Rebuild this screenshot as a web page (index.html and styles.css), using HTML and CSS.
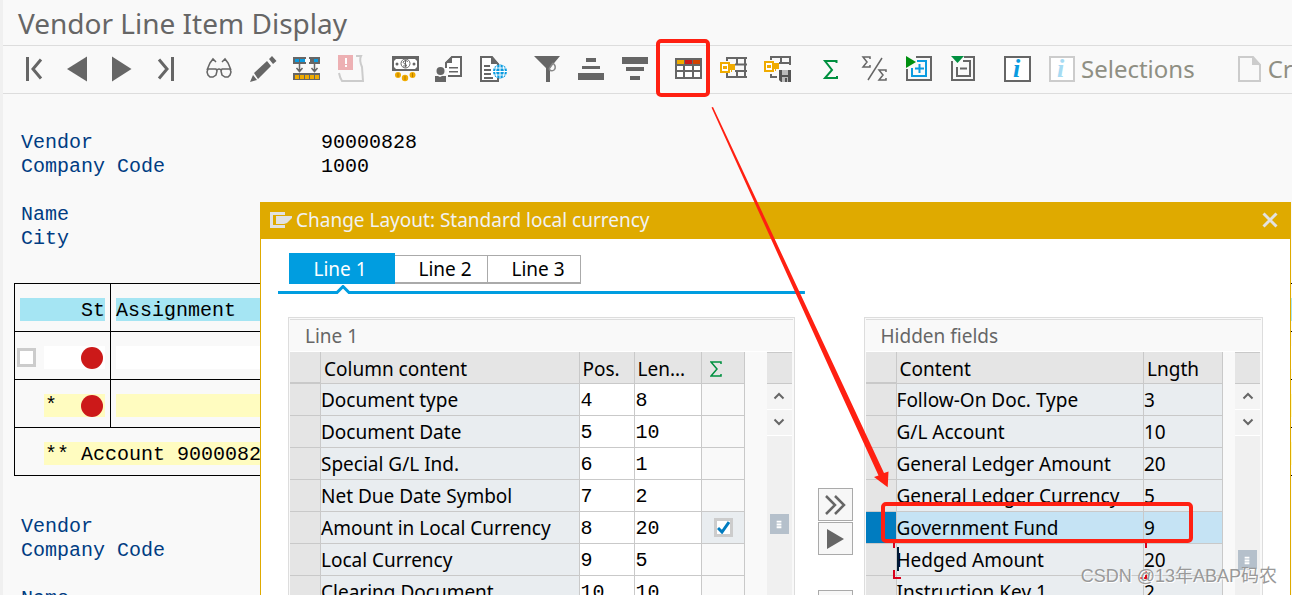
FILE: index.html
```html
<!DOCTYPE html>
<html lang="en">
<head>
<meta charset="utf-8">
<title>Vendor Line Item Display</title>
<link rel="stylesheet" href="styles.css">
</head>
<body>
<div class="app">
  <header class="title-bar"><h1>Vendor Line Item Display</h1></header>

  <nav class="toolbar" aria-label="Application toolbar">
    <div class="group">
      <button class="tool" aria-label="First"><svg class="icon" viewBox="0 0 28 28"><path d="M7 2h3v24H7z" fill="#666"/><path d="M22 4.500L14 14l8 9.500" fill="none" stroke="#666" stroke-width="3"/></svg></button>
      <button class="tool" aria-label="Previous"><svg class="icon" viewBox="0 0 28 28"><path d="M4 14L24 1.500v25z" fill="#666"/></svg></button>
      <button class="tool" aria-label="Next"><svg class="icon" viewBox="0 0 28 28"><path d="M5 1.500L24.500 14 5 26.500z" fill="#666"/></svg></button>
      <button class="tool" aria-label="Last"><svg class="icon" viewBox="0 0 28 28"><path d="M20 2h3v24h-3z" fill="#666"/><path d="M8 4.500L16 14l-8 9.500" fill="none" stroke="#666" stroke-width="3"/></svg></button>
    </div>
    <div class="group">
      <button class="tool" aria-label="Display"><svg class="icon" viewBox="0 0 28 28" fill="none" stroke="#666" stroke-width="1.500"><path d="M3 14h8l1 2-1 4-3 2H5l-2-2-1-3zM17 14h8l1 3-1 3-2 2h-3l-3-2-1-4zM12 15q2-2 4 0M2 15l3-7 3-4 3 3M26 15l-3-7-3-4-3 3"/></svg></button>
      <button class="tool" aria-label="Change"><svg class="icon" viewBox="0 0 28 28" fill="#666"><path d="M1 27l3-7 4 5zM5 18L18 6l4 5L9 24zM20 4l3-3 4.500 5L24 9z"/></svg></button>
      <button class="tool" aria-label="Mass change"><svg class="icon" viewBox="0 0 28 28"><path d="M0 2h10v7H0zM18 2h9v7h-9zM0 18h27v7H0z" fill="#666"/><path d="M10 2h3v2h-1v3h1v2h-3zM18 2h-2v2h1v3h-1v2h2z" fill="#666"/><path d="M2 4h4v3H2zM7 4h5v3H7zM21 4h4v3h-4z" fill="#0a9be0"/><path d="M2 20h4v4H2zM7 20h4v4H7zM12 20h4v4h-4zM17 20h4v4h-4zM22 20h4v4h-4z" fill="#f0ab00"/><path d="M6.500 9v8M3.500 13l3 3.500 3-3.500M21.500 9v8M18.500 13l3 3.500 3-3.500" fill="none" stroke="#666" stroke-width="1.500"/></svg></button>
      <button class="tool" aria-label="Check" disabled><svg class="icon" viewBox="0 0 28 28"><path d="M19 1h5q-2 4 1 11l1 14H5q-2-3-3-8" fill="none" stroke="#ccc" stroke-width="2"/><path d="M1 0h15v15H1z" fill="#edb0b3"/><path d="M8 3h2v6H8zM8 10h2v2H8z" fill="#fff"/></svg></button>
    </div>
    <div class="group">
      <button class="tool" aria-label="Payment"><svg class="icon" viewBox="0 0 28 28"><path d="M1 1h27v15H1z" fill="#666"/><path d="M5 4h19l2 2v6l-2 2H5l-2-2V6z" fill="#fff"/><circle cx="14.500" cy="8.500" r="4.500" fill="none" stroke="#666"/><path d="M17 6.500q-2-1.500-4-.5t0 2.500 3 2-4 .5M14.500 4.500v8" fill="none" stroke="#666"/><circle cx="6" cy="9" r="1.500" fill="#666"/><circle cx="23" cy="9" r="1.500" fill="#666"/><g fill="#f0ab00"><circle cx="7" cy="20" r="3"/><circle cx="21.500" cy="20" r="3"/><circle cx="14" cy="23" r="3.200"/></g><path d="M7 18v4M21.500 18v4M14 21v4" stroke="#b87d00"/></svg></button>
      <button class="tool" aria-label="Master record"><svg class="icon" viewBox="0 0 28 28"><path d="M11 13V8l6-6h9v19H13" fill="#fff" stroke="#666" stroke-width="2"/><path d="M10 8l7-7v7zM14 12h9v1.500h-9zM14 16h9v1.500h-9z" fill="#666"/><circle cx="5.500" cy="16" r="4" fill="#666"/><path d="M0 27v-6h3l2 1 2-1h4v6z" fill="#666"/></svg></button>
      <button class="tool" aria-label="Document"><svg class="icon" viewBox="0 0 28 28"><path d="M2 2h11l6 7v17H2z" fill="#fff" stroke="#666" stroke-width="2"/><path d="M12 1v8h8zM5 10h6v2H5zM5 14h7v2H5zM5 18h7v2H5zM5 22h9v2H5z" fill="#666"/><circle cx="21" cy="16.500" r="7" fill="#0a9be0"/><path d="M15 13h12M14 16.500h14M15 20h12M21 10v13M18 10.500q-3 6 0 12M24 10.500q3 6 0 12" fill="none" stroke="#fff"/></svg></button>
    </div>
    <div class="group">
      <button class="tool" aria-label="Filter"><svg class="icon" viewBox="0 0 28 28"><path d="M1 1h26l-10 12v14h-4V13z" fill="#666"/><path d="M20 8q4 4 1 7-3 2-5-1M20 8l-4 6" fill="none" stroke="#888" stroke-width="1.500"/></svg></button>
      <button class="tool" aria-label="Sort ascending"><svg class="icon" viewBox="0 0 28 28" fill="#666"><path d="M9 3h10v4H9zM5 11h18v3H5zM1 18h26v7H1z"/></svg></button>
      <button class="tool" aria-label="Sort descending"><svg class="icon" viewBox="0 0 28 28" fill="#666"><path d="M1 2h26v7H1zM5 12h18v4H5zM9 21h10v4H9z"/></svg></button>
    </div>
    <div class="group">
      <button class="tool" aria-label="Change layout"><svg class="icon" viewBox="0 0 28 28"><path d="M0 3h27v21H0z" fill="#666"/><path d="M2 5h7v4H2z" fill="#f0ab00"/><path d="M10 5h7v4h-7z" fill="#cc1919"/><path d="M18 5h7v4h-7z" fill="#d24300"/><path d="M2 11h6v4H2zM10 11h7v4h-7zM19 11h6v4h-6zM2 17h6v5H2zM10 17h7v5h-7zM19 17h6v5h-6z" fill="#fff"/></svg></button>
      <button class="tool" aria-label="Select layout"><svg class="icon" viewBox="0 0 28 28"><path d="M8 6V3h20M8 18v4h20M16 16h12M16 9.500h12M18 3v7M26 3v20M18 16v7" fill="none" stroke="#666" stroke-width="2"/><path d="M1 7h10v2h5v6h-3v2h-1v-2h-1v3H1z" fill="#f0ab00"/><path d="M3 9h6v7H3z" fill="#fff"/><path d="M4 11h4v3H4z" fill="#f0ab00"/></svg></button>
      <button class="tool" aria-label="Save layout"><svg class="icon" viewBox="0 0 28 28"><path d="M8 5V2h19v8M16 8h11M18 2v6M8 19v3h6" fill="none" stroke="#666" stroke-width="2"/><path d="M1 6h10v2h5v6h-3v2h-1v-2h-1v3H1z" fill="#f0ab00"/><path d="M3 8h6v7H3z" fill="#fff"/><path d="M4 10h4v3H4z" fill="#f0ab00"/><path d="M16 15h12v12H18l-2-2z" fill="#555"/><path d="M19 15h6v5h-6zM19 22h6v5h-6z" fill="#bbb"/><path d="M22 23h2v4h-2z" fill="#555"/></svg></button>
    </div>
    <div class="group">
      <button class="tool" aria-label="Total"><svg class="icon" viewBox="0 0 28 28"><path d="M19.500 8V6H8l7 9-7 8h12v-2" fill="none" stroke="#009040" stroke-width="2"/></svg></button>
      <button class="tool" aria-label="Subtotal"><svg class="icon" viewBox="0 0 28 28" fill="none" stroke="#666" stroke-width="1.500"><path d="M9 4V2H2l4 5-4 5h7v-2M25 17v-2h-7l4 5-4 5h7v-2M21 3L7 25"/></svg></button>
      <button class="tool" aria-label="Expand"><svg class="icon" viewBox="0 0 28 28"><path d="M11 2h15v23H2V14" fill="none" stroke="#666" stroke-width="2"/><path d="M12 6h9v15H7v-8" fill="none" stroke="#0a9be0" stroke-width="2"/><path d="M10 13.500h9M14.500 9v9" stroke="#0a9be0" stroke-width="2"/><path d="M1 1l10 6-10 6z" fill="#009010"/></svg></button>
      <button class="tool" aria-label="Collapse"><svg class="icon" viewBox="0 0 28 28"><path d="M15 2h10v23H3V6" fill="none" stroke="#666" stroke-width="2"/><path d="M14 6h7v15H8v-9M11 13.500h7" fill="none" stroke="#666" stroke-width="2"/><path d="M2 1h13L8.500 8z" fill="#009040"/></svg></button>
    </div>
    <div class="group">
      <button class="tool" aria-label="Information"><svg class="icon" viewBox="0 0 28 28"><path d="M2 2h25v24H2z" fill="#fff" stroke="#666" stroke-width="2"/><text class="info" x="10" y="22">i</text></svg></button>
      <button class="tool wide" disabled><svg class="icon" viewBox="0 0 28 28"><path d="M3 2h24v24H3z" fill="#fff" stroke="#ccc" stroke-width="2"/><text class="info pale" x="10" y="22">i</text></svg>Selections</button>
      <button class="tool wide create" disabled><svg class="icon" viewBox="0 0 28 28"><path d="M3 2h14l7 8v16H3z" fill="#f9f9f9" stroke="#ccc" stroke-width="2"/><path d="M16 1v9h9z" fill="#ccc"/></svg>Create</button>
    </div>
  </nav>

  <main class="report">
    <dl class="facts">
      <div><dt>Vendor</dt><dd>90000828</dd></div>
      <div><dt>Company Code</dt><dd>1000</dd></div>
      <div class="spaced"><dt>Name</dt><dd></dd></div>
      <div><dt>City</dt><dd></dd></div>
    </dl>
    <table class="items">
      <colgroup><col class="status-col"><col></colgroup>
      <thead><tr><th><div class="bar head right">St</div></th><th><div class="bar head">Assignment</div></th></tr></thead>
      <tbody>
        <tr><td><div class="status"><input type="checkbox" class="pick" aria-label="Select item"><div class="bar plain mark"><span></span><i class="ball"></i></div></div></td><td><div class="bar plain"></div></td></tr>
        <tr><td><div class="status"><div class="bar sum mark"><span>*</span><i class="ball"></i></div></div></td><td><div class="bar sum"></div></td></tr>
        <tr><td colspan="2"><div class="status"><div class="bar sum total">** Account 90000828</div></div></td></tr>
      </tbody>
    </table>
    <dl class="facts">
      <div><dt>Vendor</dt><dd></dd></div>
      <div><dt>Company Code</dt><dd></dd></div>
      <div class="spaced"><dt>Name</dt><dd></dd></div>
    </dl>
  </main>

  <section class="dialog" role="dialog" aria-labelledby="dlg-title">
    <header class="dialog-head">
      <svg class="dialog-icon" viewBox="0 0 22 16"><path d="M15 1.500H1.500v13H15" fill="none" stroke="#e2e2e2" stroke-width="3"/><path d="M6 4h16v2l-5 5-3 1H6z" fill="#e2e2e2"/></svg>
      <h2 id="dlg-title">Change Layout: Standard local currency</h2>
      <button class="close" aria-label="Close"><svg viewBox="0 0 16 16"><path d="M1.500 1.500l13 13M14.500 1.500l-13 13" stroke="#e2e2e2" stroke-width="3"/></svg></button>
    </header>
    <div class="tabs" role="tablist">
      <button role="tab" class="tab active" aria-selected="true">Line 1</button><button role="tab" class="tab">Line 2</button><button role="tab" class="tab">Line 3</button>
    </div>
    <div class="tab-line"><svg viewBox="0 0 18 9"><path d="M0 7.500h3l6-6 6 6h3" fill="#fff" stroke="#009de0" stroke-width="3"/></svg></div>

    <div class="panels">
      <section class="panel shown">
        <h3>Line 1</h3>
        <div class="panel-body">
          <table class="grid">
            <colgroup><col class="c-handle"><col><col class="c-pos"><col class="c-len"><col class="c-sum"></colgroup>
            <thead><tr><th></th><th>Column content</th><th>Pos.</th><th>Len...</th><th><svg class="sigma" viewBox="0 0 12 16"><path d="M11 3V1H1l6 7-6 7h10v-2" fill="none" stroke="#009040" stroke-width="1.500"/></svg></th></tr></thead>
            <tbody>
              <tr><td></td><td>Document type</td><td><input value="4" aria-label="Position, Document type"></td><td><input value="8" aria-label="Length, Document type"></td><td></td></tr>
              <tr><td></td><td>Document Date</td><td><input value="5" aria-label="Position, Document Date"></td><td><input value="10" aria-label="Length, Document Date"></td><td></td></tr>
              <tr><td></td><td>Special G/L Ind.</td><td><input value="6" aria-label="Position, Special G/L Ind."></td><td><input value="1" aria-label="Length, Special G/L Ind."></td><td></td></tr>
              <tr><td></td><td>Net Due Date Symbol</td><td><input value="7" aria-label="Position, Net Due Date Symbol"></td><td><input value="2" aria-label="Length, Net Due Date Symbol"></td><td></td></tr>
              <tr><td></td><td>Amount in Local Currency</td><td><input value="8" aria-label="Position, Amount in Local Currency"></td><td><input value="20" aria-label="Length, Amount in Local Currency"></td><td class="ticked"><input type="checkbox" class="pick" checked aria-label="Total, Amount in Local Currency"></td></tr>
              <tr><td></td><td>Local Currency</td><td><input value="9" aria-label="Position, Local Currency"></td><td><input value="5" aria-label="Length, Local Currency"></td><td></td></tr>
              <tr><td></td><td>Clearing Document</td><td><input value="10" aria-label="Position, Clearing Document"></td><td><input value="10" aria-label="Length, Clearing Document"></td><td></td></tr>
            </tbody>
          </table>
          <div class="scroll">
            <div class="scroll-cap"></div>
            <button aria-label="Scroll up"><svg viewBox="0 0 12 8"><path d="M1.500 6.500L6 2l4.500 4.500" fill="none" stroke="#666" stroke-width="2"/></svg></button>
            <button aria-label="Scroll down"><svg viewBox="0 0 12 8"><path d="M1.500 1.500L6 6l4.500-4.500" fill="none" stroke="#666" stroke-width="2"/></svg></button>
            <div class="thumb high"><svg viewBox="0 0 20 20"><path d="M7 7h5v2H7zM7 10h5v2H7zM7 13h5v2H7z" fill="#fff"/></svg></div>
          </div>
        </div>
      </section>

      <div class="movers">
        <button aria-label="Move all right"><svg viewBox="0 0 24 24"><path d="M3 3l9 9-9 9M12 3l9 9-9 9" fill="none" stroke="#666" stroke-width="2.500"/></svg></button>
        <button aria-label="Move right"><svg viewBox="0 0 24 24"><path d="M4 2l17 10L4 22z" fill="#666"/></svg></button>
        <button class="apart" aria-label="Move left"><svg viewBox="0 0 24 24"><path d="M20 2L3 12l17 10z" fill="#666"/></svg></button>
      </div>

      <section class="panel hidden-fields">
        <h3>Hidden fields</h3>
        <div class="panel-body">
          <table class="grid">
            <colgroup><col class="c-handle"><col><col class="c-lngth"></colgroup>
            <thead><tr><th></th><th>Content</th><th>Lngth</th></tr></thead>
            <tbody>
              <tr><td></td><td>Follow-On Doc. Type</td><td>3</td></tr>
              <tr><td></td><td>G/L Account</td><td>10</td></tr>
              <tr><td></td><td>General Ledger Amount</td><td>20</td></tr>
              <tr><td></td><td>General Ledger Currency</td><td>5</td></tr>
              <tr class="selected"><td></td><td>Government Fund</td><td>9</td></tr>
              <tr><td></td><td>Hedged Amount</td><td>20</td></tr>
              <tr><td></td><td>Instruction Key 1</td><td>2</td></tr>
            </tbody>
          </table>
          <div class="scroll">
            <div class="scroll-cap"></div>
            <button aria-label="Scroll up"><svg viewBox="0 0 12 8"><path d="M1.500 6.500L6 2l4.500 4.500" fill="none" stroke="#666" stroke-width="2"/></svg></button>
            <button aria-label="Scroll down"><svg viewBox="0 0 12 8"><path d="M1.500 1.500L6 6l4.500-4.500" fill="none" stroke="#666" stroke-width="2"/></svg></button>
            <div class="thumb low"><svg viewBox="0 0 20 20"><path d="M7 7h5v2H7zM7 10h5v2H7zM7 13h5v2H7z" fill="#fff"/></svg></div>
          </div>
        </div>
      </section>
    </div>
  </section>

  <!-- Hand-drawn callouts over the screen -->
  <svg class="callouts" width="1292" height="595" viewBox="0 0 1292 595" aria-hidden="true">
    <path d="M894 542v6M1146 542v6M894 570v8h7M1146 570v8h-7" fill="none" stroke="#d9001b" stroke-width="2"/>
    <path d="M898 547v24" stroke="#001a33" stroke-width="2"/>
    <g fill="none" stroke="#ff2012" stroke-width="4"><rect x="658" y="41" width="50" height="54" rx="3"/><rect x="883" y="504" width="308" height="37" rx="3"/></g>
    <path d="M711.500 107.500L713 107 843 385l41 88 4.500-1.500-.8 15.800L874 477l4.500-1.500L838 387z" fill="#ff2012"/>
  </svg>
  <div class="watermark">CSDN @13年ABAP码农</div>
</div>
</body>
</html>
```
FILE: styles.css
```css
* { box-sizing: border-box; }

body {
  margin: 0;
  background: #f9f9f9;
  color: #000;
  font: 20px/24px "Noto Sans", "Noto Sans CJK SC", sans-serif;
}

button, input { font: inherit; color: inherit; margin: 0; }
button { padding: 0; border: 0; background: none; }
h1, h2, h3, dl, dd { margin: 0; font-weight: 400; }
svg { display: block; }

.app {
  position: relative;
  height: 100vh;
  overflow: hidden;
  border-left: 3px solid #f0f0f0;
}

.title-bar { padding: 5px 15px 4px; border-bottom: 1px solid #ddd; }
.title-bar h1 { color: #666; font-size: 28px; line-height: 36px; }

.toolbar {
  display: flex;
  gap: 10px;
  padding: 9px 0 10px 8px;
  border-bottom: 1px solid #ddd;
}
.group { display: flex; flex: none; }
.tool { flex: none; width: 44px; padding: 0 8px; }
.icon { flex: none; width: 28px; height: 28px; }
.wide {
  display: flex;
  align-items: center;
  gap: 6px;
  width: auto;
  color: #8f8f83;
  font-size: 24px;
  line-height: 28px;
}
.create { gap: 4px; margin-left: 25px; }
.info { font: italic bold 26px "Liberation Serif", serif; fill: #0a9be0; }
.info.pale { fill: #a6dbf3; }

.report { padding: 37px 0 0 11px; font-family: "Liberation Mono", monospace; }
.facts { padding: 0 7px; color: #003c82; }
.facts div { display: flex; height: 24px; }
.facts .spaced { margin-top: 24px; }
.facts dt { width: 300px; }
.facts dd { color: #000; }

.items {
  width: 100%;
  margin: 32px 0 39px;
  border-collapse: collapse;
  table-layout: fixed;
}
.status-col { width: 96px; }
.items th, .items td {
  height: 48px;
  padding: 4px 5px 0;
  border: 1px solid #000;
  font-weight: 400;
  text-align: left;
}
.items th:last-child, .items td:last-child { border-right: 0; padding-right: 0; }
.bar { height: 23px; line-height: 26px; }
.head { background: #a5e5f3; }
.right { text-align: right; }
.plain { background: #fff; }
.sum { background: #fffcc0; }
.status { display: flex; align-items: center; justify-content: flex-end; gap: 8px; }
.status .pick { margin-left: -3px; }
.mark { display: flex; flex: none; justify-content: space-between; align-items: center; width: 61px; padding: 0 2px 0 1px; }
.ball { width: 22px; height: 22px; border-radius: 50%; background: #cc1919; }
.total { flex: 1; margin-left: 24px; padding-left: 1px; }

.pick {
  appearance: none;
  flex: none;
  display: block;
  width: 19px;
  height: 19px;
  border: 3px solid #ccc;
  background: #fff;
}

.dialog {
  position: absolute;
  top: 202px;
  right: 1px;
  left: 257px;
  bottom: 0;
  overflow: hidden;
  border: solid #dfaa00;
  border-width: 0 1px;
  background: #fff;
}
.dialog-head {
  display: flex;
  align-items: center;
  gap: 4px;
  height: 37px;
  padding: 0 12px 2px 9px;
  background: #dfaa00;
  color: #f2f2f2;
}
.dialog-head h2 { flex: 1; font-size: 19px; line-height: 24px; }
.dialog-icon { width: 22px; height: 16px; }
.close svg { width: 16px; height: 16px; }

.tabs { display: flex; align-items: flex-end; padding: 14px 28px 0; }
.tab {
  width: 93px;
  height: 29px;
  padding-left: 8px;
  border: solid #aaa;
  border-width: 1px 1px 2px 0;
  background: #fff;
  font-size: 19px;
  line-height: 24px;
}
.active {
  width: 106px;
  height: 31px;
  padding: 0 4px 0 0;
  border: 0;
  background: #009de0;
  color: #fff;
}
.tab-line {
  display: flex;
  align-items: flex-end;
  width: 51.2%;
  height: 10px;
  margin-left: 17px;
  padding-left: 56px;
  background: linear-gradient(#009de0, #009de0) bottom / 100% 3px no-repeat;
}
.tab-line svg { width: 18px; height: 9px; background: #fff; }

.panels { display: flex; padding: 23px 27px 0; }
.panel {
  min-width: 0;
  padding: 1px 1px 0;
  border: 1px solid #ddd;
  background: #f9f9f9;
}
.shown { flex: 507 1 0; }
.hidden-fields { flex: 399 1 0; }
.panel h3 {
  padding: 5px 15px 3px;
  border-top: 1px solid #ddd;
  border-bottom: 1px solid #fff;
  color: #666;
  font-size: 19px;
  line-height: 23px;
}
.panel-body { display: flex; justify-content: space-between; padding-right: 1px; }

.grid {
  flex: 1;
  width: 0;
  border-collapse: separate;
  border-spacing: 0;
  table-layout: fixed;
  font-size: 19px;
}
.c-handle { width: 31px; }
.c-pos { width: 55px; }
.c-len { width: 67px; }
.c-sum { width: 43px; }
.c-lngth { width: 79px; }
.grid th, .grid td {
  height: 32px;
  padding: 0;
  border: solid #c9c9c9;
  border-width: 0 1px 1px 0;
  background: #e9edf0;
  font-weight: 400;
  text-align: left;
  white-space: nowrap;
}
.grid th { padding: 2px 0 0 3px; background: #e5e5e5; }
.grid td:first-child { background: #e5e5e5; }
.grid th:first-child { border-bottom-width: 2px; }
.shown td:nth-child(3), .shown td:nth-child(4) { background: #fff; }
.shown td:nth-child(5) { background: #f9f9f9; }
.grid td.ticked { background: #e9edf0; }
.grid td input:not(.pick) {
  display: block;
  width: 100%;
  height: 31px;
  padding: 2px 1px 0;
  border: 0;
  background: transparent;
  font: 20px/24px "Liberation Mono", monospace;
}
.grid .pick { margin-left: 12px; }
.pick:checked {
  background: #fff url("data:image/svg+xml,%3Csvg xmlns='http://www.w3.org/2000/svg' viewBox='0 0 13 13'%3E%3Cpath d='M1 7l4 4 7-10' fill='none' stroke='%23007cc0' stroke-width='3'/%3E%3C/svg%3E") center / 13px no-repeat;
}
.sigma { width: 12px; height: 16px; margin-left: 5px; }
.selected td { background: #c5e3f4; }
.grid .selected td:first-child { background: #007cc0; }

.scroll { flex: none; width: 25px; margin-left: 22px; background: #f0f0f0; }
.hidden-fields .scroll { margin-left: 12px; }
.scroll-cap { height: 32px; border: solid #c9c9c9; border-width: 1px 0; background: #e5e5e5; }
.scroll button {
  display: flex;
  align-items: center;
  justify-content: center;
  width: 100%;
  height: 26px;
  padding-bottom: 1px;
  border-bottom: 1px solid #fff;
  background: #f4f4f4;
}
.scroll button svg { width: 12px; height: 8px; }
.thumb { width: 19px; height: 20px; margin-left: 3px; background: #b5c0cb; }
.high { margin-top: 78px; }
.low { margin-top: 114px; }

.movers { flex: none; width: 69px; padding: 171px 0 0 23px; }
.movers button {
  display: flex;
  align-items: center;
  justify-content: center;
  width: 35px;
  height: 33px;
  margin-bottom: 1px;
  border: 1px solid #aaa;
  background: #f7f7f7;
}
.movers svg { width: 24px; height: 24px; }
.movers .apart { margin-top: 35px; }

.callouts { position: absolute; top: 0; left: -3px; pointer-events: none; }
.watermark {
  position: absolute;
  right: 15px;
  bottom: 6px;
  color: #999;
  font: 18px/26px "Liberation Sans", "Noto Sans CJK SC", sans-serif;
  text-shadow: 1px 1px 0 #fff;
}
```
